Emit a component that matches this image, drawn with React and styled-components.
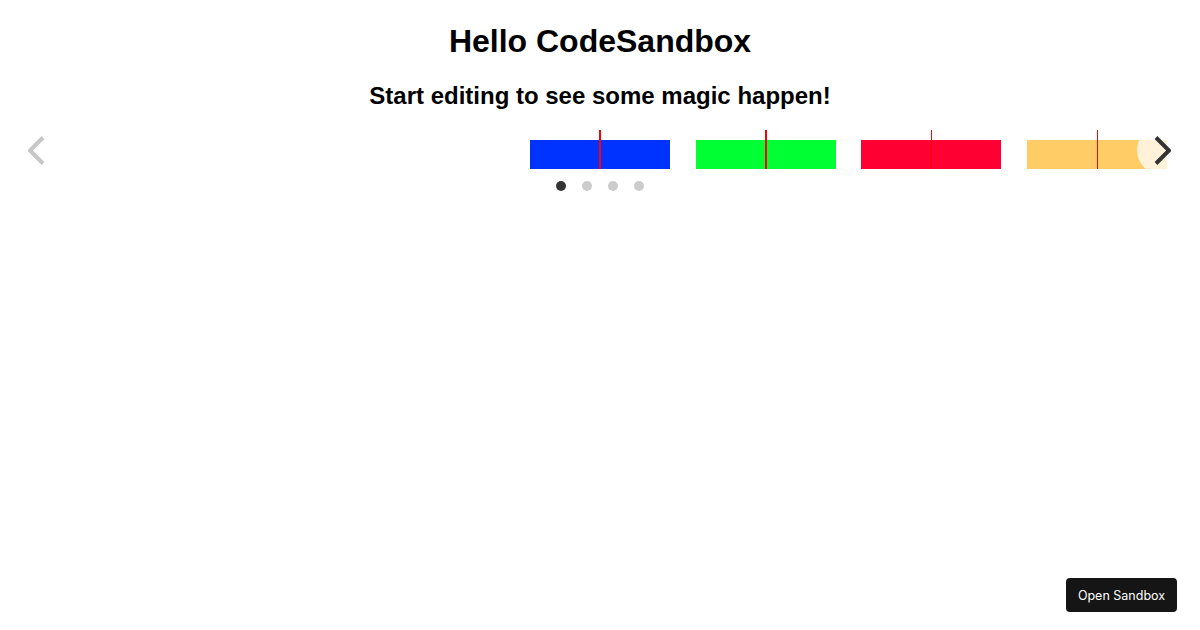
import React from 'react';
import styled, { createGlobalStyle } from 'styled-components';

const GlobalStyle = createGlobalStyle`
  body {
    margin: 8px;
    background: #fff;
    font-family: "Liberation Sans", Arial, sans-serif;
  }
`;

const Page = styled.div`
  text-align: center;
`;

const Title = styled.h1`
  font-size: 32px;
  margin: 15.4px 0 21.44px;
`;

const Subtitle = styled.h2`
  font-size: 24px;
  margin: 21.44px 0 20.6px;
`;

const Slider = styled.div`
  position: relative;
  padding: 0 12px;
`;

const Track = styled.div`
  display: grid;
  grid-template-columns: repeat(7, 1fr);
`;

const Slide = styled.div`
  position: relative;
  grid-column: ${({ start }) => start || 'auto'};
  display: flex;
  justify-content: center;
  padding-top: 10px;

  &::after {
    content: '';
    position: absolute;
    top: 0;
    bottom: 0;
    left: calc(50% - 0.5px);
    width: 1.5px;
    background: #ff0000;
  }
`;

const Block = styled.div`
  width: 140px;
  height: 29px;
  background: ${({ color }) => color};
`;

const Arrow = styled.button`
  position: absolute;
  top: 20px;
  ${({ side }) => (side === 'left' ? 'left: 3.5px;' : 'right: 5px;')}
  width: 50px;
  height: 50px;
  margin-top: -25px;
  padding: 0;
  border: none;
  border-radius: 50%;
  background: ${({ side }) =>
    side === 'left' ? 'transparent' : 'rgba(255, 255, 255, 0.75)'};
  display: flex;
  align-items: center;
  justify-content: center;
  cursor: pointer;

  svg {
    display: block;
  }
`;

const Dots = styled.ul`
  list-style: none;
  margin: 12px 0 0;
  padding: 0;
  display: flex;
  justify-content: center;
  gap: 16px;
`;

const Dot = styled.li`
  width: 10px;
  height: 10px;
  border-radius: 50%;
  background: ${({ active }) => (active ? '#333' : '#ccc')};
`;

const OpenButton = styled.a`
  position: fixed;
  right: 23px;
  bottom: 18px;
  width: 111px;
  height: 34px;
  display: flex;
  align-items: center;
  justify-content: center;
  background: #151515;
  color: #fff;
  border-radius: 4px;
  font-family: Inter, "Liberation Sans", sans-serif;
  font-size: 12.5px;
  text-decoration: none;
`;

const Chevron = ({ dir, color }) => (
  <svg width='17' height='29' viewBox='0 0 17 29'>
    <polyline
      points={dir === 'left' ? '15,1.5 2,14.5 15,27.5' : '2,1.5 15,14.5 2,27.5'}
      fill='none'
      stroke={color}
      strokeWidth='4'
    />
  </svg>
);

const slides = ['#0033ff', '#00ff33', '#ff0033', '#ffcc66'];

const App = () => (
  <Page>
    <GlobalStyle />
    <Title>Hello CodeSandbox</Title>
    <Subtitle>Start editing to see some magic happen!</Subtitle>
    <Slider>
      <Track>
        {slides.map((color, i) => (
          <Slide key={color} start={i === 0 ? 4 : undefined}>
            <Block color={color} />
          </Slide>
        ))}
      </Track>
      <Arrow side='left' aria-label='Previous'>
        <Chevron dir='left' color='#c6c6c6' />
      </Arrow>
      <Arrow side='right' aria-label='Next'>
        <Chevron dir='right' color='#333' />
      </Arrow>
      <Dots>
        {slides.map((color, i) => (
          <Dot key={color} active={i === 0} />
        ))}
      </Dots>
    </Slider>
    <OpenButton href='#'>Open Sandbox</OpenButton>
  </Page>
);

export default App;
